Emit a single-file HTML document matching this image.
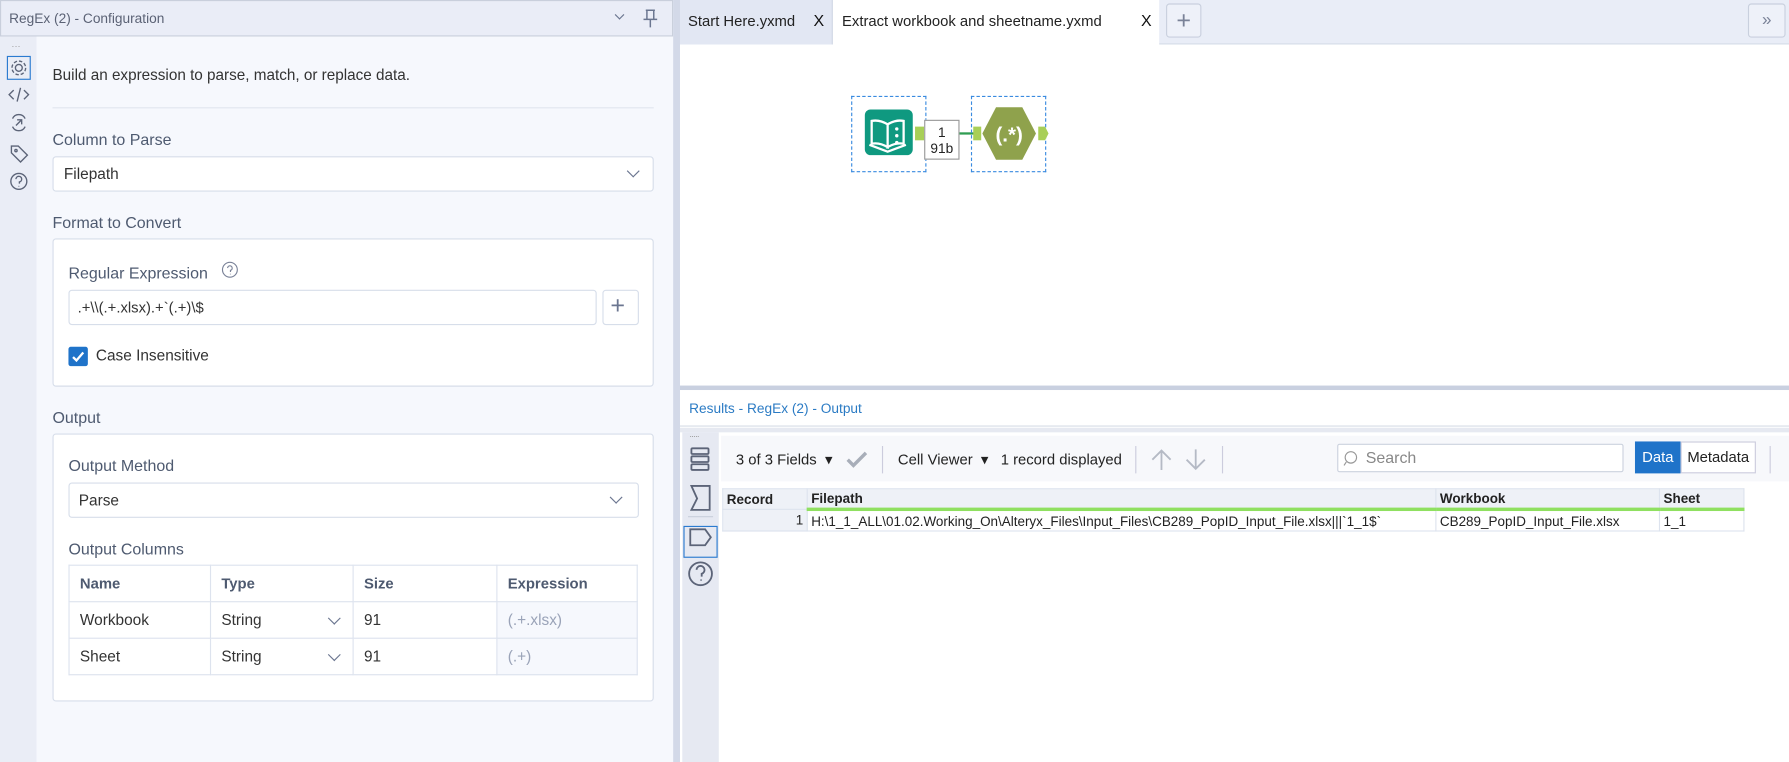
<!DOCTYPE html>
<html><head><meta charset="utf-8"><style>
*{box-sizing:border-box;margin:0;padding:0}
html,body{width:1789px;height:762px;overflow:hidden;background:#fff}
#w{position:absolute;left:0;top:0;width:1568px;height:668px;transform:scale(1.14094,1.1407);transform-origin:0 0;font-family:"Liberation Sans",sans-serif;color:#333;font-size:13px}
.a{position:absolute}
.lbl{position:absolute;font-size:14px;color:#4e5a70}
.box{position:absolute;background:#fff;border:1px solid #d7deea;border-radius:3px}
.chev{position:absolute;width:8px;height:8px;border-right:1.5px solid #6b7690;border-bottom:1.5px solid #6b7690;transform:rotate(45deg)}
td,th{border:1px solid #dde3ee}
</style></head><body><div id="w">
<div class="a" style="left:0;top:0;width:590px;height:668px;background:#f6f8fd"></div>
<div class="a" style="left:0;top:0;width:590px;height:32px;background:#eaedf7;border:1px solid #c9cfdc"></div>
<div class="a" style="left:8px;top:9px;font-size:12px;color:#5b6275">RegEx (2) - Configuration</div>
<div class="chev" style="left:540px;top:10px;width:6px;height:6px"></div>
<svg class="a" style="left:562px;top:7px" width="16" height="18"><path d="M4 2h8M5 2v8M11 2v8M2 10h12M8 10v7" stroke="#6b7690" fill="none" stroke-width="1.3"/></svg>
<div class="a" style="left:0;top:32px;width:32px;height:636px;background:#eaedf6"></div>
<div class="a" style="left:10px;top:36px;font-size:8px;color:#999">···</div>
<div class="a" style="left:6px;top:49px;width:21px;height:21px;border:1px solid #2b7bd0"></div>
<svg class="a" style="left:0;top:48px" width="32" height="125" fill="none" stroke="#5c6478" stroke-width="1.2">
<circle cx="16.5" cy="11.5" r="3"/><circle cx="16.5" cy="11.5" r="6" stroke-dasharray="3 1.7"/>
<path d="M12 31l-4 4 4 4M21 31l4 4-4 4M18 29l-3 12"/>
<path d="M11 56a6 6 0 0 1 11 0M11 63a6 6 0 0 0 11 0M14 62l5-5M15 57h4v4"/>
<path d="M10 80v6l8 8 6-6-8-8z"/><circle cx="14" cy="84" r="1"/>
<circle cx="16.5" cy="111" r="7"/><path d="M14 109a2.5 2.5 0 1 1 3 2.5v1.5M16.5 115v.5"/>
</svg>
<div class="a" style="left:46px;top:58px;font-size:13.4px;color:#333">Build an expression to parse, match, or replace data.</div>
<div class="a" style="left:46px;top:94px;width:527px;height:1px;background:#e1e6ef"></div>
<div class="lbl" style="left:46px;top:114px">Column to Parse</div>
<div class="box" style="left:46px;top:137px;width:527px;height:31px"></div>
<div class="a" style="left:56px;top:145px;font-size:13.5px">Filepath</div>
<div class="chev" style="left:551px;top:146px"></div>
<div class="lbl" style="left:46px;top:187px">Format to Convert</div>
<div class="box" style="left:46px;top:209px;width:527px;height:130px"></div>
<div class="lbl" style="left:60px;top:231px">Regular Expression</div>
<svg class="a" style="left:193px;top:228px" width="17" height="17" fill="none" stroke="#7a8298" stroke-width="1"><circle cx="8.5" cy="8.5" r="6.5"/><path d="M6.5 7a2 2 0 1 1 2.5 2v1.5M9 12v.5"/></svg>
<div class="box" style="left:60px;top:254px;width:463px;height:31px"></div>
<div class="a" style="left:68px;top:262px;font-size:13px">.+\\(.+.xlsx).+`(.+)\$</div>
<div class="box" style="left:528px;top:254px;width:32px;height:31px"></div>
<div class="a" style="left:535px;top:255px;font-size:22px;color:#6b7690">+</div>
<div class="a" style="left:60px;top:304px;width:17px;height:17px;background:#1f73c9;border-radius:2px"></div>
<svg class="a" style="left:60px;top:304px" width="17" height="17"><path d="M4 9l3 3 6-7" stroke="#fff" stroke-width="2" fill="none"/></svg>
<div class="a" style="left:84px;top:304px;font-size:13.5px">Case Insensitive</div>
<div class="lbl" style="left:46px;top:358px">Output</div>
<div class="box" style="left:46px;top:380px;width:527px;height:235px"></div>
<div class="lbl" style="left:60px;top:400px">Output Method</div>
<div class="box" style="left:60px;top:423px;width:500px;height:31px"></div>
<div class="a" style="left:69px;top:431px;font-size:13.5px">Parse</div>
<div class="chev" style="left:536px;top:432px"></div>
<div class="lbl" style="left:60px;top:473px">Output Columns</div>
<table class="a" style="left:60px;top:495px;width:499px;border-collapse:collapse;background:#fff;font-size:13.5px">
<tr style="height:32px"><th style="width:124px;text-align:left;padding-left:9px;color:#4e5a70;font-size:13px">Name</th><th style="width:125px;text-align:left;padding-left:9px;color:#4e5a70;font-size:13px">Type</th><th style="width:126px;text-align:left;padding-left:9px;color:#4e5a70;font-size:13px">Size</th><th style="text-align:left;padding-left:9px;color:#4e5a70;font-size:13px">Expression</th></tr>
<tr style="height:32px"><td style="padding-left:9px">Workbook</td><td style="padding-left:9px;position:relative">String<div class="chev" style="left:104px;top:10px"></div></td><td style="padding-left:9px">91</td><td style="padding-left:9px;color:#9aa3b8;background:#f6f8fd">(.+.xlsx)</td></tr>
<tr style="height:32px"><td style="padding-left:9px">Sheet</td><td style="padding-left:9px;position:relative">String<div class="chev" style="left:104px;top:10px"></div></td><td style="padding-left:9px">91</td><td style="padding-left:9px;color:#9aa3b8;background:#f6f8fd">(.+)</td></tr>
</table>
<div class="a" style="left:590px;top:0;width:6px;height:668px;background:#d3d9e8"></div>
<div class="a" style="left:596px;top:0;width:972px;height:39px;background:#e9edf7;border-bottom:1px solid #d6dce8"></div>
<div class="a" style="left:596px;top:0;width:134px;height:39px;background:#e2e7f3;border-right:1px solid #cfd6e4"></div>
<div class="a" style="left:603px;top:11px;font-size:13px;color:#222">Start Here.yxmd</div>
<div class="a" style="left:713px;top:10px;font-size:14px;color:#111">X</div>
<div class="a" style="left:730px;top:0;width:286px;height:40px;background:#fff"></div>
<div class="a" style="left:738px;top:11px;font-size:13px;color:#222">Extract workbook and sheetname.yxmd</div>
<div class="a" style="left:1000px;top:10px;font-size:14px;color:#111">X</div>
<div class="a" style="left:1022px;top:3px;width:31px;height:30px;border:1px solid #c9d0de;border-radius:3px;background:#eef1f9;color:#7a8298;font-size:22px;text-align:center;line-height:27px">+</div>
<div class="a" style="left:1532px;top:3px;width:33px;height:30px;border:1px solid #c9d0de;border-radius:3px;background:#eef1f9;color:#7a8298;font-size:15px;text-align:center;line-height:27px">»</div>
<div class="a" style="left:746px;top:84px;width:66px;height:67px;border:1px dashed #3a8be0"></div>
<svg class="a" style="left:756px;top:93px" width="46" height="46"><rect x="2" y="3" width="42" height="40" rx="5" fill="#0f9980"/><path d="M8 13c5-1 9 0 14 3v20c-5-3-9-4-14-3zM36 13c-5-1-9 0-14 3v20c5-3 9-4 14-3z" fill="none" stroke="#fff" stroke-width="2"/><path d="M6 34l16 6 16-6" stroke="#fff" stroke-width="2" fill="none"/><circle cx="30" cy="20" r="1.5" fill="#fff"/><circle cx="30" cy="26" r="1.5" fill="#fff"/><circle cx="30" cy="32" r="1.5" fill="#fff"/></svg>
<div class="a" style="left:802px;top:111px;width:8px;height:12px;background:#a8cf57"></div>
<div class="a" style="left:840px;top:116px;width:14px;height:2px;background:#2f9d52"></div>
<div class="a" style="left:810px;top:105px;width:31px;height:35px;border:1px solid #999;background:#fff;font-size:12px;text-align:center;line-height:14px;padding-top:3px;color:#222">1<br>91b</div>
<div class="a" style="left:851px;top:84px;width:66px;height:67px;border:1px dashed #3a8be0"></div>
<div class="a" style="left:853px;top:111px;width:7px;height:12px;background:#a8cf57"></div>
<svg class="a" style="left:860px;top:92px" width="64" height="50"><polygon points="13,2 36,2 48,25 36,48 13,48 1,25" fill="#8fa24c"/><text x="24.5" y="32" font-family="Liberation Sans" font-weight="bold" font-size="18" fill="#fff" text-anchor="middle">(.*)</text><polygon points="50,19 56,19 59,25 56,31 50,31" fill="#a8cf57"/></svg>
<div class="a" style="left:596px;top:338px;width:972px;height:4px;background:#c9d0e0"></div>
<div class="a" style="left:596px;top:342px;width:972px;height:32px;background:#fff;border-bottom:1px solid #d7dce6"></div>
<div class="a" style="left:604px;top:351px;font-size:12px;color:#2b7bc4">Results - RegEx (2) - Output</div>
<div class="a" style="left:596px;top:375px;width:972px;height:293px;background:#fff"></div>
<div class="a" style="left:596px;top:375px;width:972px;height:4px;background:#e6e9f1"></div>
<div class="a" style="left:598px;top:379px;width:32px;height:289px;background:#e6e9f2"></div>
<div class="a" style="left:604px;top:378px;font-size:8px;color:#999;letter-spacing:-1px">·····</div>
<div class="a" style="left:599px;top:461px;width:30px;height:28px;border:1px solid #2b7bd0"></div>
<svg class="a" style="left:598px;top:390px" width="32" height="130" fill="none" stroke="#5c6478" stroke-width="1.6"><rect x="8" y="3" width="15" height="5" rx="1"/><rect x="8" y="10" width="15" height="5" rx="1"/><rect x="8" y="17" width="15" height="5" rx="1"/><path d="M8 36h16v21H8l5-10z"/><path d="M5 63h22" stroke="#c9cedb" stroke-width="1"/><path d="M7 74h13l5 7-5 7H7z"/><circle cx="16" cy="113" r="10"/><path d="M12.5 109.5a3.5 3.5 0 1 1 4.5 3.5v2.5M16.5 118v1"/></svg>
<div class="a" style="left:632px;top:382px;width:936px;height:40px;background:#f7f8fb"></div>
<div class="a" style="left:645px;top:395px;font-size:13px;color:#222">3 of 3 Fields &nbsp;▾</div>
<svg class="a" style="left:741px;top:395px" width="20" height="16"><path d="M2 8l5 5 11-11" stroke="#a8aeb9" stroke-width="3" fill="none"/></svg>
<div class="a" style="left:773px;top:391px;width:1px;height:24px;background:#ccd"></div>
<div class="a" style="left:787px;top:395px;font-size:13px;color:#222">Cell Viewer &nbsp;▾ &nbsp;&nbsp;1 record displayed</div>
<div class="a" style="left:995px;top:391px;width:1px;height:24px;background:#ccd"></div>
<svg class="a" style="left:1006px;top:392px" width="54" height="22" fill="none" stroke="#b5bac5" stroke-width="1.6"><path d="M12 20V3M4 11l8-8 8 8M42 2v17M34 11l8 8 8-8"/></svg>
<div class="a" style="left:1071px;top:391px;width:1px;height:24px;background:#ccd"></div>
<div class="a" style="left:1172px;top:389px;width:251px;height:25px;border:1px solid #ccd2de;background:#fff;border-radius:2px"></div>
<svg class="a" style="left:1177px;top:394px" width="16" height="16" fill="none" stroke="#999"><circle cx="7" cy="7" r="5"/><path d="M3 11l-2 3"/></svg>
<div class="a" style="left:1197px;top:393px;font-size:14px;color:#888">Search</div>
<div class="a" style="left:1433px;top:387px;width:40px;height:28px;background:#1f73c9;color:#fff;font-size:13px;text-align:center;line-height:28px">Data</div>
<div class="a" style="left:1473px;top:387px;width:66px;height:28px;background:#fff;border:1px solid #ccd;color:#222;font-size:13px;text-align:center;line-height:26px">Metadata</div>
<div class="a" style="left:1551px;top:391px;width:1px;height:24px;background:#ccd"></div>
<table class="a" style="left:633px;top:428px;border-collapse:collapse;font-size:11.8px;color:#222">
<tr style="height:18px;background:#eef1f7;font-weight:bold"><td style="width:74px;padding-left:3px">Record</td><td style="width:551px;padding-left:3px;border-bottom:3px solid #8fe060">Filepath</td><td style="width:196px;padding-left:3px;border-bottom:3px solid #8fe060">Workbook</td><td style="width:74px;padding-left:3px;border-bottom:3px solid #8fe060">Sheet</td></tr>
<tr style="height:19px"><td style="text-align:right;padding-right:3px;background:#eef1f7">1</td><td style="padding-left:3px">H:\1_1_ALL\01.02.Working_On\Alteryx_Files\Input_Files\CB289_PopID_Input_File.xlsx|||`1_1$`</td><td style="padding-left:3px">CB289_PopID_Input_File.xlsx</td><td style="padding-left:3px">1_1</td></tr>
</table>
</div></body></html>
